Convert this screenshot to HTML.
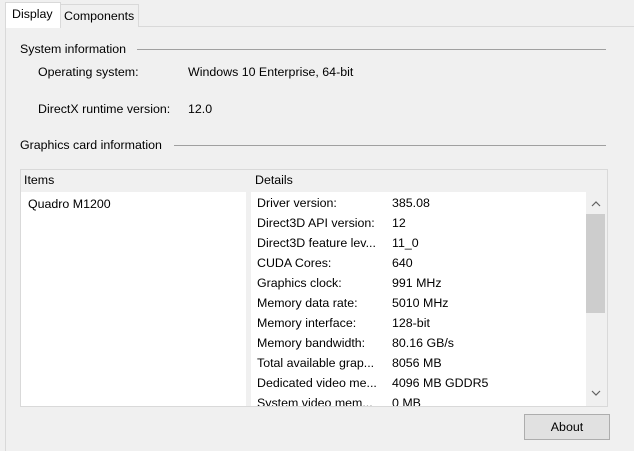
<!DOCTYPE html>
<html style="overflow:hidden;width:634px;height:451px"><head><style>
body{margin:0;width:634px;height:451px;background:#f0f0f0;font-family:"Liberation Sans",sans-serif;font-size:12.4px;color:#000;position:relative;overflow:hidden}
.a{position:absolute;white-space:nowrap}
.line{position:absolute;height:1px;background:#a0a0a0}
</style></head><body>
<div class="a" style="left:5px;top:26px;width:640px;height:440px;border:1px solid #d9d9d9;background:#f0f0f0;box-sizing:border-box"></div>
<div class="a" style="left:59px;top:4px;width:78px;height:22px;border:1px solid #d9d9d9;border-bottom:none;background:#f0f0f0"></div>
<div class="a" style="left:64px;top:9px">Components</div>
<div class="a" style="left:5px;top:2px;width:54px;height:25px;border:1px solid #d9d9d9;border-bottom:none;background:#fff"></div>
<div class="a" style="left:12px;top:7px">Display</div>

<div class="a" style="left:20px;top:42px">System information</div>
<div class="line" style="left:137px;top:49px;width:469px"></div>
<div class="a" style="left:38px;top:65px">Operating system:</div>
<div class="a" style="left:188px;top:65px">Windows 10 Enterprise, 64-bit</div>
<div class="a" style="left:38px;top:102px">DirectX runtime version:</div>
<div class="a" style="left:188px;top:102px">12.0</div>
<div class="a" style="left:20px;top:138px">Graphics card information</div>
<div class="line" style="left:174px;top:145px;width:432px"></div>

<div class="a" style="left:20px;top:169px;width:586px;height:236px;border:1px solid #d9d9d9;background:#f0f0f0"></div>
<div class="a" style="left:24px;top:173px">Items</div>
<div class="a" style="left:255px;top:173px">Details</div>
<div class="a" style="left:21px;top:192px;width:225px;height:214px;background:#fff"></div>
<div class="a" style="left:28px;top:197px">Quadro M1200</div>
<div class="a" style="left:251px;top:192px;width:335px;height:214px;background:#fff;overflow:hidden">
<div class="a" style="left:6px;top:1px;line-height:20px">Driver version:<br>Direct3D API version:<br>Direct3D feature lev...<br>CUDA Cores:<br>Graphics clock:<br>Memory data rate:<br>Memory interface:<br>Memory bandwidth:<br>Total available grap...<br>Dedicated video me...<br>System video mem...</div>
<div class="a" style="left:141px;top:1px;line-height:20px">385.08<br>12<br>11_0<br>640<br>991 MHz<br>5010 MHz<br>128-bit<br>80.16 GB/s<br>8056 MB<br>4096 MB GDDR5<br>0 MB</div>
</div>
<div class="a" style="left:586px;top:192px;width:20px;height:214px;background:#f0f0f0"></div>
<div class="a" style="left:586px;top:214px;width:19px;height:99px;background:#cdcdcd"></div>
<svg class="a" style="left:586px;top:196px" width="20" height="14"><path d="M6 10 L10 6 L14 10" fill="none" stroke="#606060" stroke-width="1.2"/></svg>
<svg class="a" style="left:586px;top:386px" width="20" height="14"><path d="M6 5 L10 9 L14 5" fill="none" stroke="#606060" stroke-width="1.2"/></svg>

<div class="a" style="left:524px;top:414px;width:84px;height:24px;border:1px solid #adadad;background:#e1e1e1;text-align:center;line-height:24px">About</div>
</body></html>
